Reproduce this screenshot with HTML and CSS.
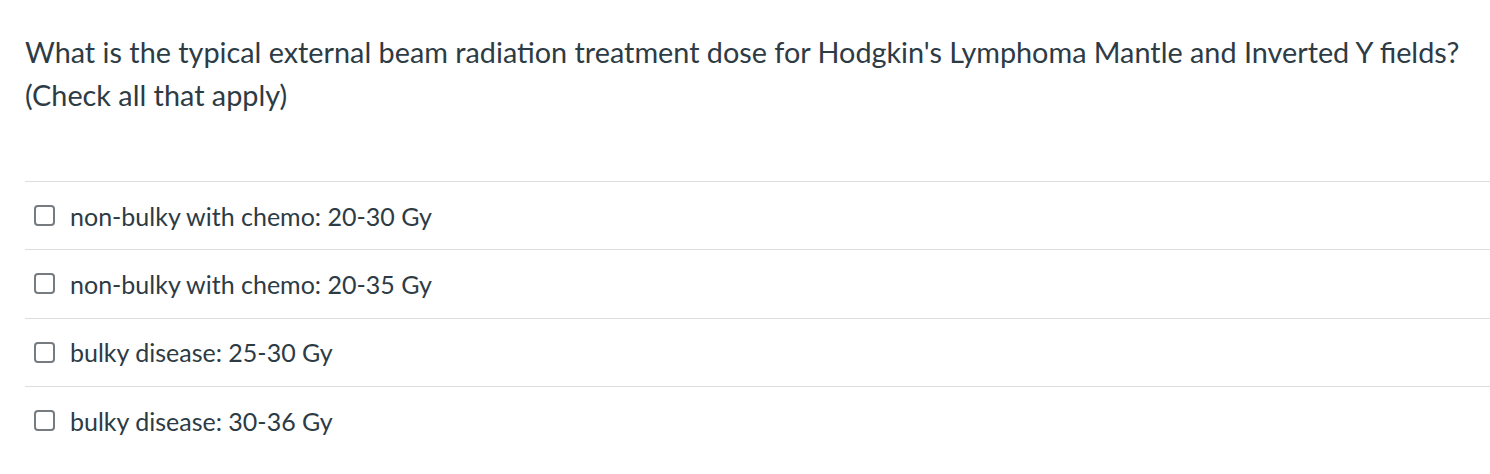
FILE: index.html
```html
<!DOCTYPE html>
<html>
<head>
<meta charset="utf-8">
<link rel="stylesheet" href="styles.css">
</head>
<body>
<div class="quiz">
  <div class="question">What is the typical external beam radiation treatment dose for Hodgkin's Lymphoma Mantle and Inverted Y fields? (Check all that apply)</div>
  <div class="answers">
    <label class="answer"><span class="box"></span><span class="label">non-bulky with chemo: 20-30 Gy</span></label>
    <label class="answer"><span class="box"></span><span class="label">non-bulky with chemo: 20-35 Gy</span></label>
    <label class="answer"><span class="box"></span><span class="label">bulky disease: 25-30 Gy</span></label>
    <label class="answer"><span class="box"></span><span class="label">bulky disease: 30-36 Gy</span></label>
  </div>
</div>
</body>
</html>
```
FILE: styles.css
```css
html, body {
  margin: 0;
  padding: 0;
  background: #ffffff;
}
body {
  font-family: Lato, "Liberation Sans", sans-serif;
  color: #2d3b45;
}
.quiz {
  padding: 31px 0 0 25px;
}
.question {
  font-size: 28.8px;
  line-height: 43px;
  padding-right: 20px;
}
.answers {
  margin-top: 64px;
}
.answer {
  display: flex;
  align-items: center;
  gap: 15px;
  height: 68.33px;
  box-sizing: border-box;
  border-top: 1px solid #dcdfe2;
  padding-left: 9px;
}
.box {
  width: 21px;
  height: 21px;
  box-sizing: border-box;
  border: 2px solid #767b80;
  border-radius: 4px;
  flex: none;
}
.label {
  font-size: 25px;
}
```
